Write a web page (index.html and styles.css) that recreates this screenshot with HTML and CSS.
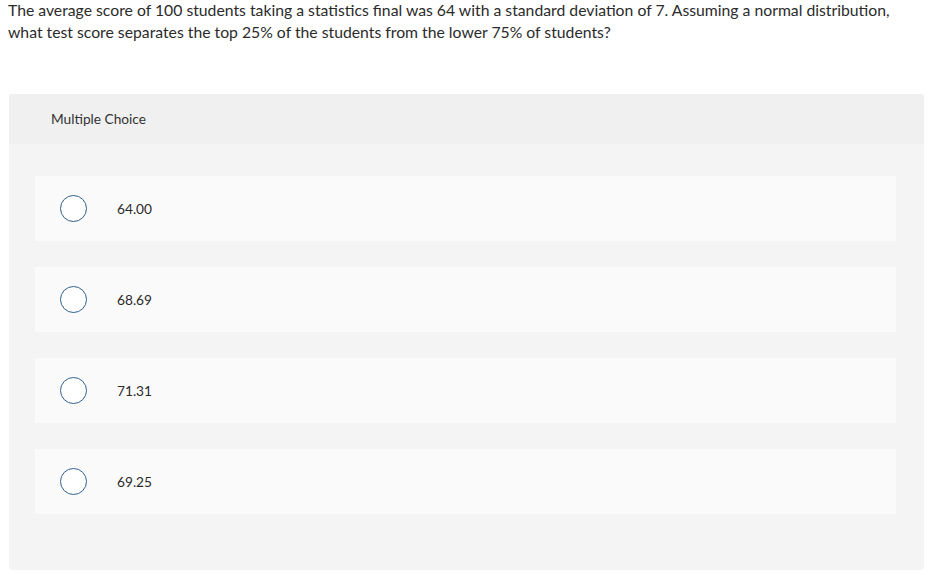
FILE: index.html
```html
<!DOCTYPE html>
<html>
<head>
<meta charset="utf-8">
<link rel="stylesheet" href="styles.css">
</head>
<body>
<p class="question">The average score of 100 students taking a statistics final was 64 with a standard deviation of 7. Assuming a normal distribution, what test score separates the top 25% of the students from the lower 75% of students?</p>
<div class="panel">
  <div class="panel-head">Multiple Choice</div>
  <div class="panel-body">
    <div class="option"><span class="radio"></span><span class="label">64.00</span></div>
    <div class="option"><span class="radio"></span><span class="label">68.69</span></div>
    <div class="option"><span class="radio"></span><span class="label">71.31</span></div>
    <div class="option"><span class="radio"></span><span class="label">69.25</span></div>
  </div>
</div>
</body>
</html>
```
FILE: styles.css
```css
html, body { margin: 0; padding: 0; background: #fff; }
body {
  font-family: "Lato", "Liberation Sans", sans-serif;
  color: #2b2b2b;
  padding: 0 7px 0 9px;
}
.question {
  margin: -1px 0 0 -1px;
  max-width: 905px;
  font-size: 15.75px;
  line-height: 22px;
}
.panel {
  margin-top: 51px;
  width: 915px;
  border-radius: 3px;
  background: #f4f4f4;
  overflow: hidden;
}
.panel-head {
  background: #f0f0f0;
  height: 50px;
  line-height: 50px;
  padding-left: 42px;
  font-size: 13.7px;
  color: #333;
}
.panel-body {
  padding: 32px 28px 56px 26px;
  display: flex;
  flex-direction: column;
  gap: 26px;
}
.option {
  background: #fafafa;
  height: 65px;
  display: flex;
  align-items: center;
  padding-left: 25px;
}
.radio {
  width: 25px;
  height: 25px;
  border: 1.5px solid #2f5f8e;
  border-radius: 50%;
  background: #fff;
  box-sizing: content-box;
  flex: none;
}
.label {
  margin-left: 30px;
  font-size: 13.7px;
  color: #2b2b2b;
}
```
